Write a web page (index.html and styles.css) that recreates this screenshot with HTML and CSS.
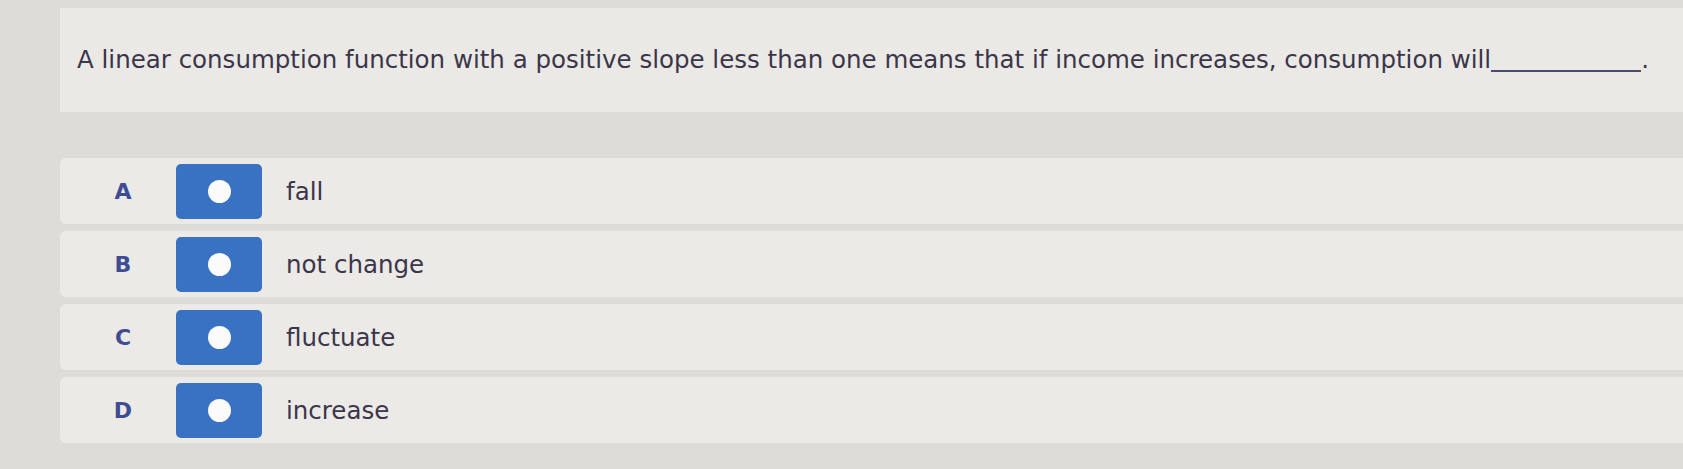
FILE: index.html
```html
<!DOCTYPE html>
<html>
<head>
<meta charset="utf-8">
<link rel="stylesheet" href="styles.css">
</head>
<body>
<div class="page">
  <div class="question">
    <p class="qtext">A linear consumption function with a positive slope less than one means that if income increases, consumption will<span class="blank"></span>.</p>
  </div>
  <div class="options">
    <div class="option">
      <span class="letter">A</span>
      <span class="radio"><span class="dot"></span></span>
      <span class="label">fall</span>
    </div>
    <div class="option">
      <span class="letter">B</span>
      <span class="radio"><span class="dot"></span></span>
      <span class="label">not change</span>
    </div>
    <div class="option">
      <span class="letter">C</span>
      <span class="radio"><span class="dot"></span></span>
      <span class="label">fluctuate</span>
    </div>
    <div class="option">
      <span class="letter">D</span>
      <span class="radio"><span class="dot"></span></span>
      <span class="label">increase</span>
    </div>
  </div>
</div>
</body>
</html>
```

FILE: styles.css
```css
html, body {
  margin: 0;
  padding: 0;
}
body {
  background: #dddcd9;
  font-family: "DejaVu Sans", Verdana, sans-serif;
  width: 1683px;
  height: 469px;
  overflow: hidden;
}
.page {
  padding-top: 8px;
  padding-left: 60px;
}
.question {
  background: #eae9e6;
  height: 104px;
  padding-left: 17px;
  box-sizing: border-box;
}
.qtext {
  margin: 0;
  padding-top: 38px;
  font-size: 24.5px;
  line-height: 28px;
  color: #3b3649;
  white-space: nowrap;
}
.blank {
  display: inline-block;
  width: 150px;
  border-bottom: 2px solid #4a4c6e;
  vertical-align: baseline;
  margin-bottom: -4px;
}
.options {
  margin-top: 46px;
  display: flex;
  flex-direction: column;
  gap: 7px;
}
.option {
  background: #ebeae7;
  height: 66px;
  border-radius: 6px 0 0 6px;
  display: flex;
  align-items: center;
}
.letter {
  width: 40px;
  margin-left: 43px;
  text-align: center;
  font-weight: bold;
  font-size: 22px;
  color: #3e4d93;
}
.radio {
  margin-left: 33px;
  width: 86px;
  height: 55px;
  background: #3a72c3;
  border-radius: 5px;
  display: flex;
  align-items: center;
  justify-content: center;
}
.dot {
  width: 23px;
  height: 23px;
  border-radius: 50%;
  background: #fbfbfb;
}
.label {
  margin-left: 24px;
  font-size: 24.5px;
  color: #3b3649;
}
```
